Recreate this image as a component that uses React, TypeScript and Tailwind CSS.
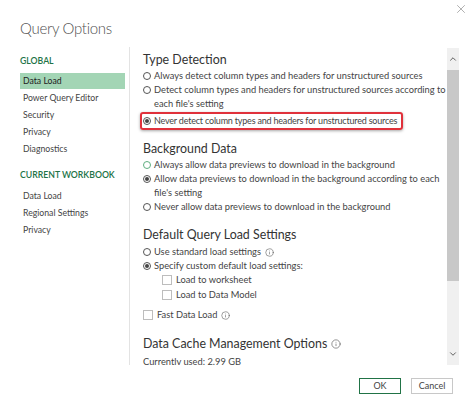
import { X, ChevronUp, ChevronDown, Info } from 'lucide-react';

const font = { fontFamily: 'Lato, "Open Sans", sans-serif' };

const Radio = ({ checked, tint }: { checked?: boolean; tint?: boolean }) => (
  <span
    className={
      'mt-[3px] w-[8px] h-[8px] shrink-0 rounded-full border flex items-center justify-center ' +
      (tint ? 'border-[#5fae7f]' : 'border-[#555]')
    }
  >
    {checked && <span className="w-[4px] h-[4px] rounded-full bg-[#444]" />}
  </span>
);

const Option = ({ children, checked, tint }: { children: React.ReactNode; checked?: boolean; tint?: boolean }) => (
  <div className="flex gap-[3px] leading-[14px]">
    <Radio checked={checked} tint={tint} />
    <span>{children}</span>
  </div>
);

const Box = ({ label, info }: { label: string; info?: boolean }) => (
  <div className="flex items-center gap-[4px] leading-[14.5px]">
    <span className="w-[10px] h-[10px] border border-[#bdbdbd] bg-white" />
    <span>{label}</span>
    {info && <Info size={9} strokeWidth={1.5} className="text-[#555]" />}
  </div>
);

const Heading = ({ children }: { children: React.ReactNode }) => (
  <div className="text-[12.4px] leading-[18px] text-[#333] flex items-center gap-[4px]">{children}</div>
);

export default function App() {
  return (
    <div className="w-[474px] h-[415px] bg-white relative text-[#333]" style={font}>
      <X size={14} strokeWidth={1} className="absolute right-[6px] top-[2px] text-[#777]" />
      <div className="h-[47px] pl-[20px] pt-[15px] text-[15px] tracking-[-0.3px] leading-[26px] font-light text-[#505050]">Query Options</div>

      <div className="flex h-[318px]">
        <aside className="w-[130px] shrink-0 border-r border-[#e3e3e3] pl-[20px] pr-[4px] pt-[7px] text-[8.7px] whitespace-nowrap">
          <div className="font-semibold text-[#217346] leading-[14px] mb-[5px]">GLOBAL</div>
          <div className="bg-[#a3d5b5] h-[16px] leading-[16px] pl-[3px] text-[#222]">Data Load</div>
          <div className="pl-[3px] text-[#444]">
            {['Power Query Editor', 'Security', 'Privacy', 'Diagnostics'].map((s) => (
              <div key={s} className="h-[17px] leading-[17px]">{s}</div>
            ))}
          </div>
          <div className="font-semibold text-[#217346] leading-[14px] mt-[11px] mb-[5px]">CURRENT WORKBOOK</div>
          <div className="pl-[3px] text-[#444]">
            {['Data Load', 'Regional Settings', 'Privacy'].map((s) => (
              <div key={s} className="h-[17px] leading-[17px]">{s}</div>
            ))}
          </div>
        </aside>

        <main className="flex-1 pl-[13px] pt-[4px] overflow-hidden text-[9.3px] text-[#444]">
          <Heading>Type Detection</Heading>
          <div>
            <Option>Always detect column types and headers for unstructured sources</Option>
            <Option>Detect column types and headers for unstructured sources according to each file's setting</Option>
            <div className="mt-[1px] -ml-[3px] w-fit whitespace-nowrap text-[9px] tracking-[-0.2px] border-2 border-[#e0313b] rounded-[3px] shadow-[0_1px_3px_rgba(0,0,0,0.35)] pl-[1px] pr-[4px]">
              <Option checked>Never detect column types and headers for unstructured sources</Option>
            </div>
          </div>

          <div className="mt-[10px]">
            <Heading>Background Data</Heading>
          </div>
          <div>
            <Option tint>Always allow data previews to download in the background</Option>
            <Option checked>Allow data previews to download in the background according to each file's setting</Option>
            <Option>Never allow data previews to download in the background</Option>
          </div>

          <div className="mt-[12px]">
            <Heading>Default Query Load Settings</Heading>
          </div>
          <div className="mt-[1px]">
            <div className="flex items-center">
              <Option>Use standard load settings</Option>
              <Info size={9} strokeWidth={1.5} className="ml-[4px] text-[#555]" />
            </div>
            <Option checked>Specify custom default load settings:</Option>
            <div className="pl-[19px]">
              <Box label="Load to worksheet" />
              <Box label="Load to Data Model" />
            </div>
            <div className="mt-[6px]">
              <Box label="Fast Data Load" info />
            </div>
          </div>

          <div className="mt-[12px]">
            <Heading>
              Data Cache Management Options
              <Info size={10} strokeWidth={1.5} className="text-[#555]" />
            </Heading>
          </div>
          <div className="mt-[2px] leading-[14px]">Currently used: 2.99 GB</div>
        </main>

        <div className="w-[12px] shrink-0 mr-[15px] mt-[1px] bg-[#f0f0f0] flex flex-col items-center">
          <ChevronUp size={10} strokeWidth={2} className="text-[#444] my-[6px]" />
          <div className="w-full h-[211px] bg-[#c8c8c8]" />
          <div className="flex-1" />
          <ChevronDown size={10} strokeWidth={2} className="text-[#444] my-[6px]" />
        </div>
      </div>

      <div className="flex justify-end gap-[10px] pr-[21px] pt-[13px] text-[9px]">
        <button className="w-[42px] h-[16px] border border-[#217346] text-[#444] bg-white">OK</button>
        <button className="w-[42px] h-[16px] border border-[#c8c8c8] text-[#444] bg-white">Cancel</button>
      </div>
    </div>
  );
}
